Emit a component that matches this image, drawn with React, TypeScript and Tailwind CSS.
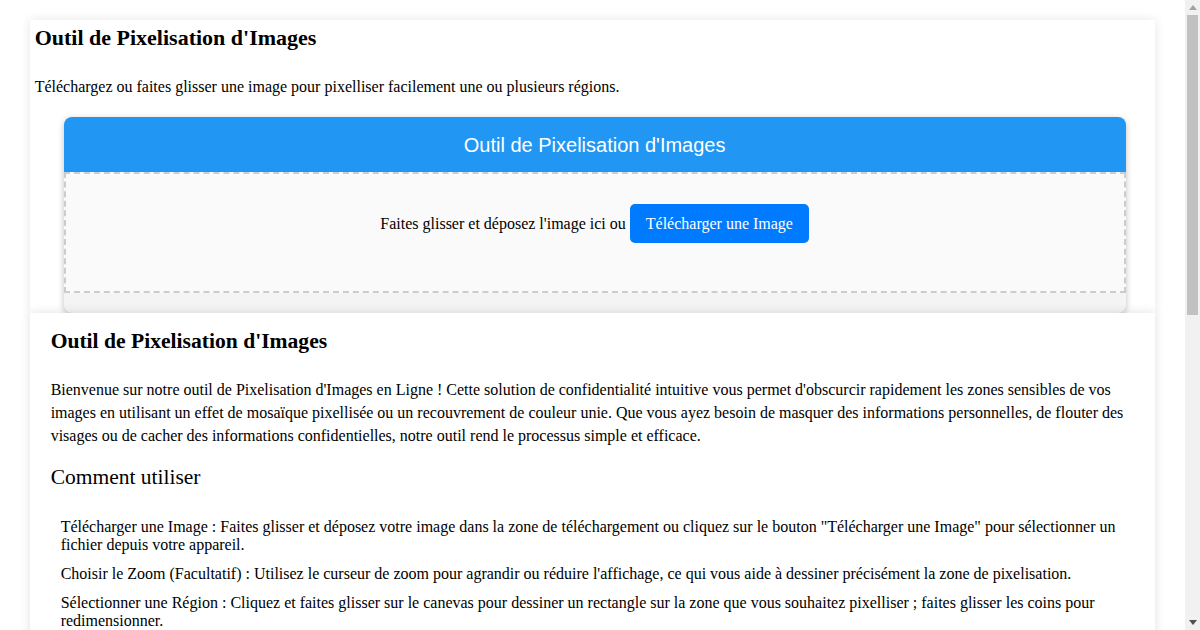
const steps = [
  {
    title: "Télécharger une Image",
    text: "Faites glisser et déposez votre image dans la zone de téléchargement ou cliquez sur le bouton \"Télécharger une Image\" pour sélectionner un fichier depuis votre appareil.",
  },
  {
    title: "Choisir le Zoom (Facultatif)",
    text: "Utilisez le curseur de zoom pour agrandir ou réduire l'affichage, ce qui vous aide à dessiner précisément la zone de pixelisation.",
  },
  {
    title: "Sélectionner une Région",
    text: "Cliquez et faites glisser sur le canevas pour dessiner un rectangle sur la zone que vous souhaitez pixelliser ; faites glisser les coins pour redimensionner.",
  },
  {
    title: "Choisir le Mode",
    text: "Sélectionnez l'effet de mosaïque pixellisée ou un recouvrement de couleur unie, puis ajustez la taille des pixels selon vos besoins.",
  },
  {
    title: "Appliquer la Pixelisation",
    text: "Cliquez sur le bouton \"Appliquer\" pour pixelliser la région sélectionnée. Répétez l'opération pour masquer plusieurs zones de l'image.",
  },
  {
    title: "Télécharger le Résultat",
    text: "Une fois satisfait, cliquez sur \"Télécharger\" pour enregistrer l'image pixellisée sur votre appareil.",
  },
];

const features = [
  "Traitement 100 % local : vos images ne quittent jamais votre navigateur.",
  "Pixelisation de plusieurs régions sur une même image.",
  "Choix entre un effet mosaïque et un recouvrement de couleur unie.",
  "Taille des pixels réglable pour un floutage plus ou moins fort.",
  "Compatible avec les formats JPG, PNG, WEBP et GIF.",
];

// window scrollbar as it appears in the screenshot
const Scrollbar = () => (
  <aside className="flex h-full w-[15px] shrink-0 flex-col bg-[#f1f1f1]">
    <div className="flex h-[15px] items-center justify-center">
      <svg width="8" height="5" viewBox="0 0 8 5">
        <path d="M0 5 L4 0 L8 5 Z" fill="#a3a3a3" />
      </svg>
    </div>
    <div className="mx-[2px] h-[300px] bg-[#c1c1c1]" />
    <div className="flex-1" />
    <div className="flex h-[15px] items-center justify-center">
      <svg width="8" height="5" viewBox="0 0 8 5">
        <path d="M0 0 L8 0 L4 5 Z" fill="#505050" />
      </svg>
    </div>
  </aside>
);

export default function App() {
  return (
    <div className="flex h-screen overflow-hidden bg-white font-['Liberation_Serif',serif] text-black">
      <main className="min-w-0 flex-1 overflow-hidden pt-[20px] pb-[20px]">
        {/* Outil */}
        <div className="mx-auto w-[95%] bg-white px-[5px] pt-[4px] shadow-[0_0_10px_rgba(0,0,0,0.1)]">
          <h2 className="text-[22px] font-bold leading-[27px]">Outil de Pixelisation d'Images</h2>
          <p className="mt-[27px] text-[16px] leading-[18px]">
            Téléchargez ou faites glisser une image pour pixelliser facilement une ou plusieurs régions.
          </p>

          <div className="ml-[29px] mt-[21px] w-[1062px] rounded-[8px] bg-[#f4f4f4] pb-[20px] shadow-[0_2px_6px_rgba(0,0,0,0.25)]">
            <div className="flex h-[55px] items-center justify-center rounded-t-[8px] bg-[#2196f3] font-['Liberation_Sans',sans-serif] text-[20px] text-white">
              Outil de Pixelisation d'Images
            </div>
            <div className="h-[121px] border-2 border-dashed border-[#cccccc] bg-[#fafafa] pt-[30px] text-center text-[16px]">
              Faites glisser et déposez l'image ici ou{" "}
              <button className="rounded-[5px] bg-[#007bff] px-[16px] py-[10px] text-[16px] leading-[19px] text-white">
                Télécharger une Image
              </button>
            </div>
          </div>
        </div>

        {/* Description */}
        <div className="mx-auto w-[95%] bg-white px-[21px] pt-[15px] pb-[30px] shadow-[0_0_10px_rgba(0,0,0,0.12)]">
          <h2 className="text-[21.6px] font-bold leading-[27px]">Outil de Pixelisation d'Images</h2>
          <p className="mt-[23px] text-[16px] leading-[23px]">
            Bienvenue sur notre outil de Pixelisation d'Images en Ligne ! Cette solution de confidentialité intuitive vous permet d'obscurcir rapidement les zones sensibles de vos images en utilisant un effet de mosaïque pixellisée ou un recouvrement de couleur unie. Que vous ayez besoin de masquer des informations personnelles, de flouter des visages ou de cacher des informations confidentielles, notre outil rend le processus simple et efficace.
          </p>

          <h3 className="mt-[18px] text-[21.5px] leading-[25px]">Comment utiliser</h3>
          <ul className="mt-[28px] pl-[10px]">
            {steps.map((s) => (
              <li key={s.title} className="mb-[11px] text-[16px] leading-[18px]">
                {s.title} : {s.text}
              </li>
            ))}
          </ul>

          <h3 className="mt-[22px] text-[21.5px] leading-[25px]">Fonctionnalités</h3>
          <ul className="mt-[20px] pl-[10px]">
            {features.map((f) => (
              <li key={f} className="mb-[11px] text-[16px] leading-[18px]">
                {f}
              </li>
            ))}
          </ul>
        </div>
      </main>
      <Scrollbar />
    </div>
  );
}
